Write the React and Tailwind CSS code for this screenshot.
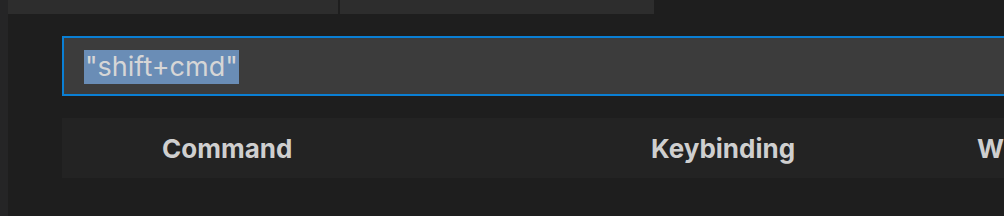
export default function App() {
  return (
    <div className="flex w-[1004px] h-[216px] overflow-hidden bg-[#1e1e1e]" style={{ fontFamily: "Inter, 'Liberation Sans', sans-serif" }}>
      <div className="w-[8px] shrink-0 bg-[#252526]" />
      <div className="flex flex-col flex-1 min-w-0 overflow-hidden">
        <div className="flex gap-[2px] h-[14px] shrink-0">
          <div className="w-[330px] bg-[#2d2d2d]" />
          <div className="w-[314px] bg-[#2d2d2d]" />
        </div>
        <div className="mt-[22px] ml-[54px] w-[1100px] h-[60px] shrink-0 border-2 border-[#0a7fd4] bg-[#3c3c3c] flex items-center pl-[20px]">
          <span className="bg-[#6a8db6] text-[#d6d6d6] text-[27px] leading-[34px] h-[34px] px-[1px] mt-[2px]">"shift+cmd"</span>
        </div>
        <div className="mt-[22px] ml-[54px] w-[1100px] h-[60px] shrink-0 bg-[#232323] flex items-center text-[#cfcfcf] font-bold text-[26px] pl-[100px]">
          <div className="w-[489px] shrink-0">Command</div>
          <div className="w-[326px] shrink-0">Keybinding</div>
          <div className="shrink-0">When</div>
        </div>
      </div>
    </div>
  );
}
